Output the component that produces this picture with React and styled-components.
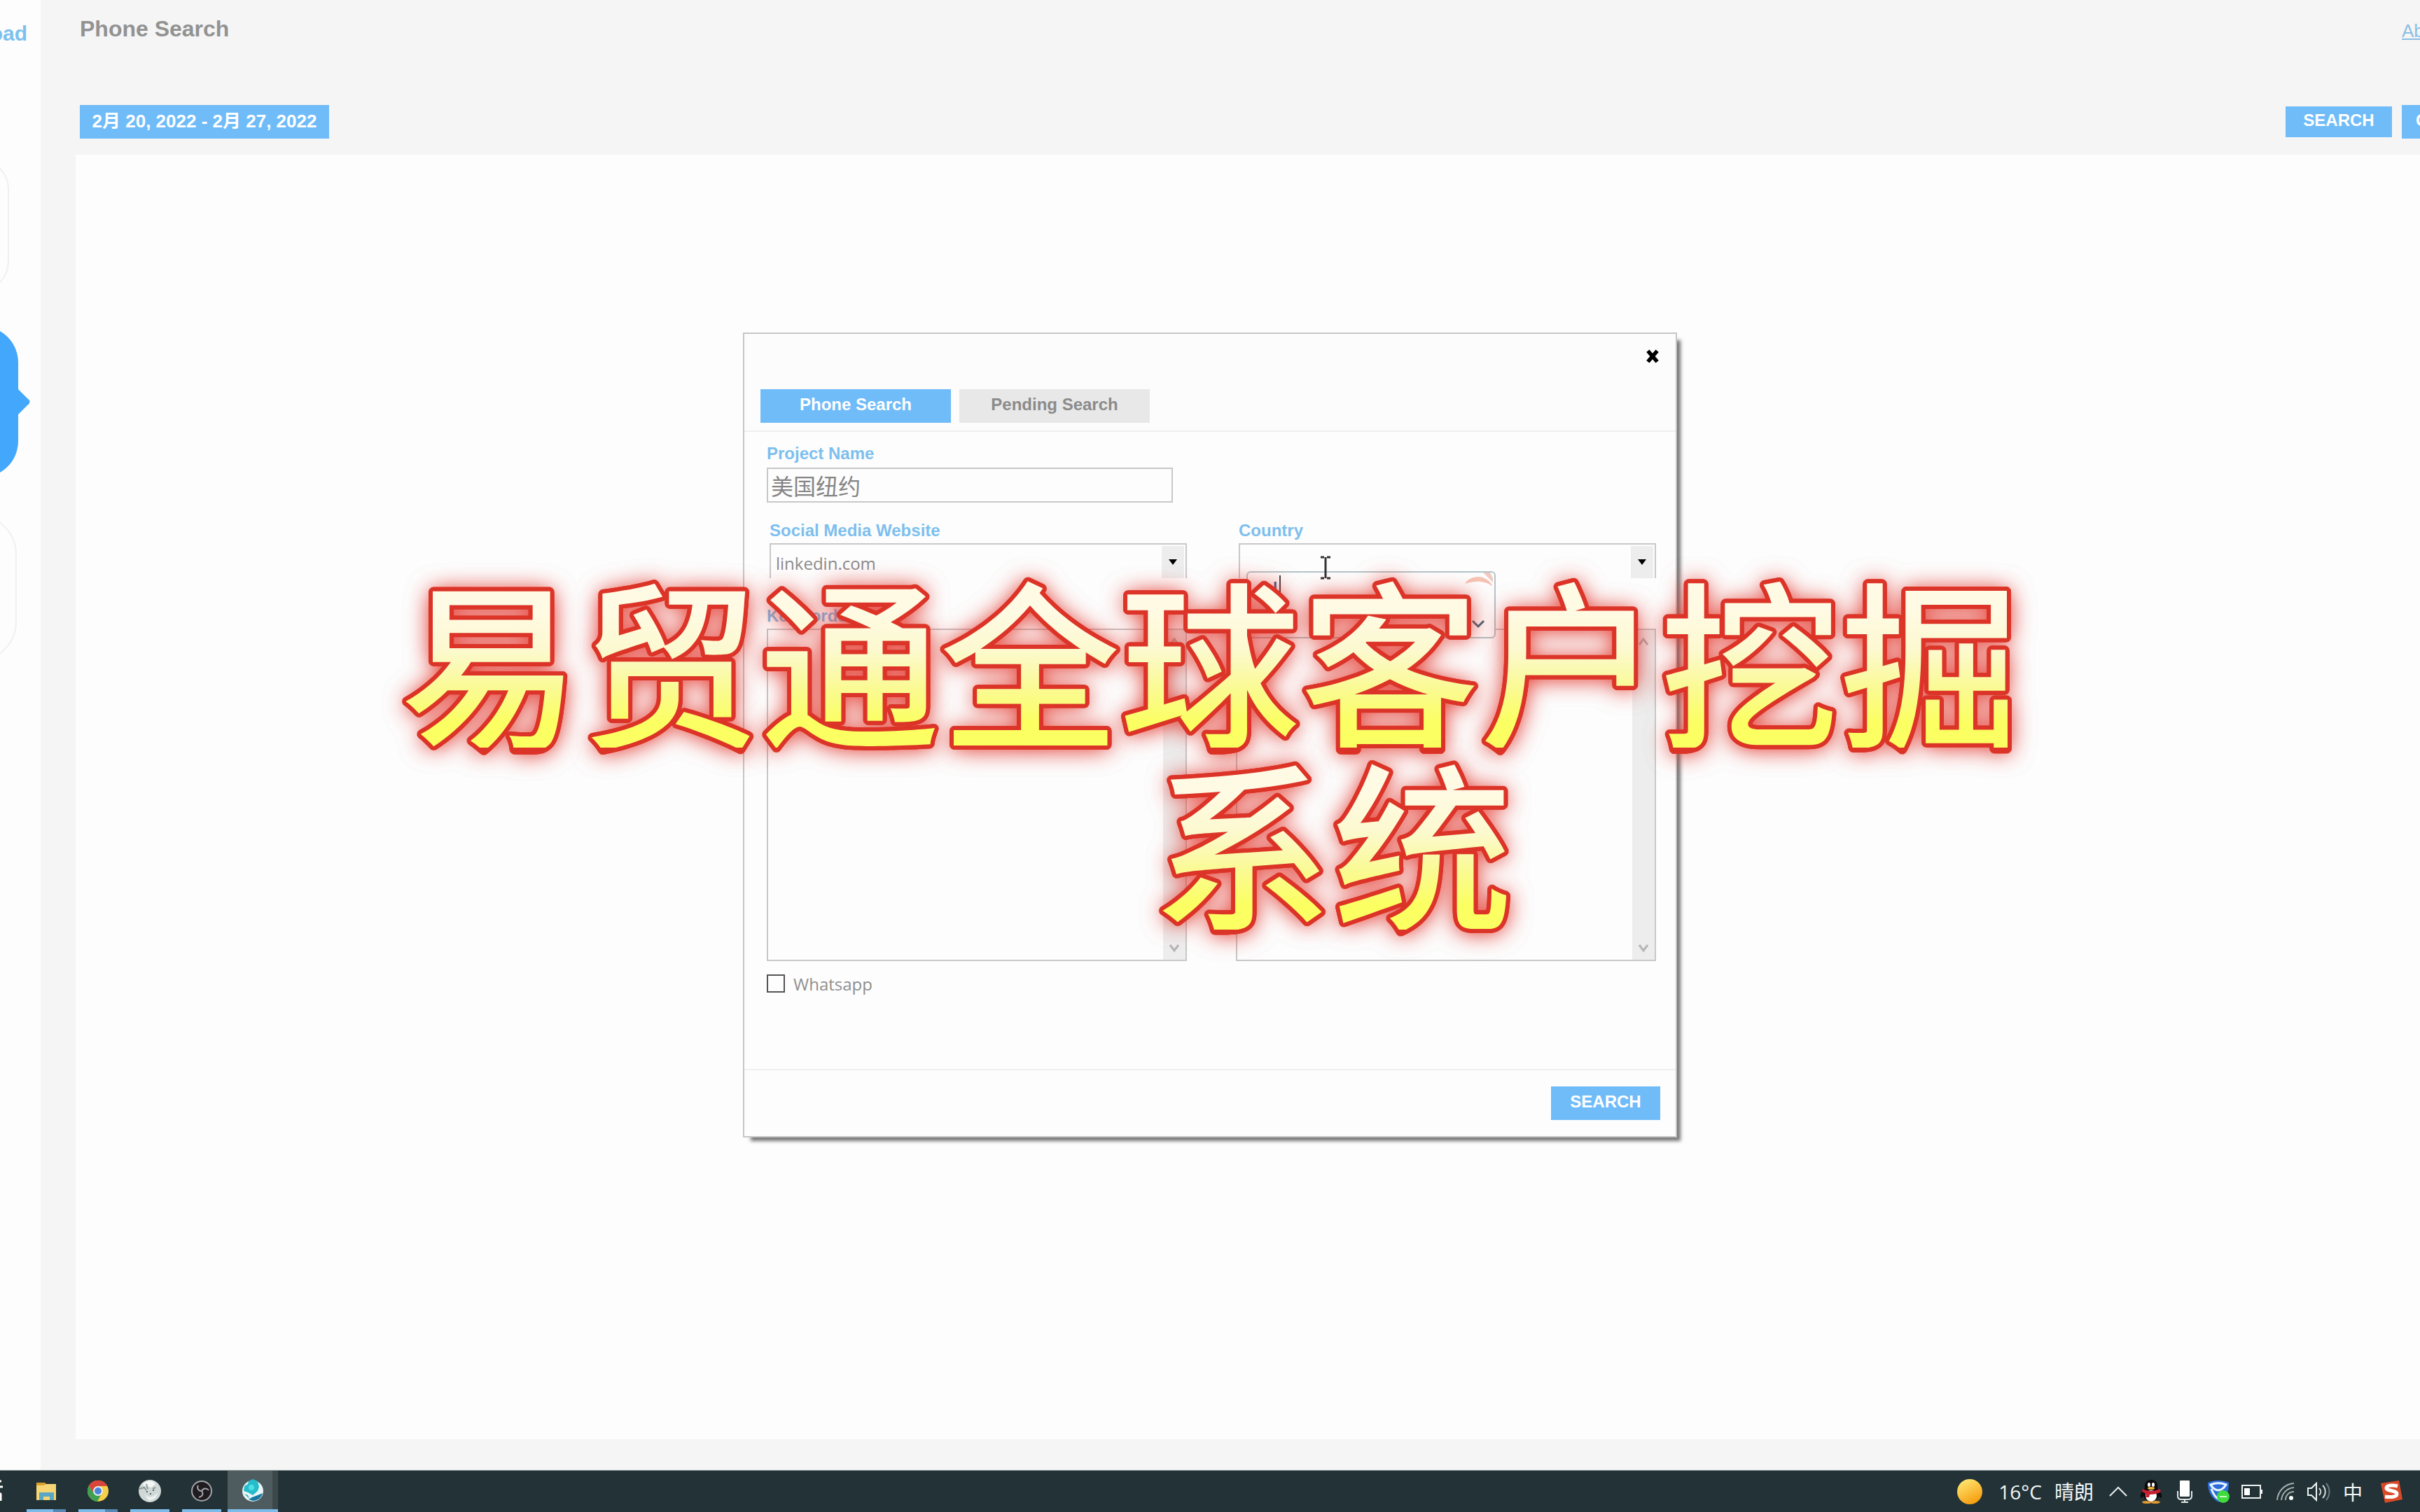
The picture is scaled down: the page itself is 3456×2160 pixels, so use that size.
import React, { useState } from "react";
import styled, { createGlobalStyle } from "styled-components";

const GlobalStyle = createGlobalStyle`
  * {
    box-sizing: border-box;
  }
  body {
    margin: 0;
    background-color: #f5f5f5;
    font-family: "Liberation Sans", "Noto Sans CJK SC", sans-serif;
  }
  button, input, select, textarea {
    font-family: inherit;
    margin: 0;
    border-radius: 0;
  }
`;

const Screen = styled.div`
  position: relative;
  display: flex;
  flex-direction: column;
  min-height: 100vh;
  overflow: hidden;
`;

const Workspace = styled.div`
  position: relative;
  display: flex;
  flex: 1;
`;

const Sidebar = styled.aside`
  display: flex;
  flex-direction: column;
  align-items: flex-start;
  width: 58px;
  overflow: hidden;
  background-color: #fdfdfd;
`;

const SidebarTitle = styled.div`
  display: flex;
  justify-content: flex-end;
  width: 39px;
  height: 231px;
  padding-top: 30px;
  overflow: hidden;
  color: #7cc1ee;
  font-size: 30px;
  font-weight: bold;
  line-height: 36px;
`;

const NavShapes = styled.svg`
  display: block;
  width: 58px;
  height: 720px;
`;

const Main = styled.main`
  display: flex;
  flex: 1;
  flex-direction: column;
  min-width: 0;
  padding: 0 0 44px 50px;
`;

const TopBar = styled.header`
  display: flex;
  justify-content: space-between;
  height: 150px;
  padding: 22px 0 0 6px;
`;

const PageTitle = styled.h1`
  margin: 0;
  color: #929292;
  font-size: 32px;
  line-height: 38px;
`;

const AboutLink = styled.a`
  width: 26px;
  overflow: hidden;
  color: #8bbfe4;
  font-size: 26px;
  line-height: 44px;
`;

const Toolbar = styled.div`
  display: flex;
  align-items: center;
  gap: 14px;
  height: 71px;
  padding: 0 0 23px 6px;
`;

const BlueButton = styled.button`
  width: ${(props) => props.$width}px;
  height: ${(props) => props.$height || 48}px;
  padding: 0 0 4px;
  overflow: hidden;
  border: none;
  background-color: #70bcf9;
  color: #fff;
  font-size: 24px;
  font-weight: bold;
  white-space: nowrap;
`;

const DateButton = styled(BlueButton)`
  padding-bottom: 8px;
  font-size: 26px;
`;

const ClippedButton = styled(BlueButton)`
  padding-left: 20px;
  text-align: left;
`;

const Spacer = styled.div`
  flex: 1;
`;

const Panel = styled.section`
  flex: 1;
  background-color: #fdfdfd;
`;

const ModalLayer = styled.div`
  position: absolute;
  inset: 0;
  display: flex;
  align-items: center;
  justify-content: center;
`;

const Modal = styled.form`
  width: 1334px;
  border: 2px solid #c6c6c6;
  background-color: #fdfdfd;
  box-shadow: 8px 8px 5px -3px #777;
`;

const ModalHeader = styled.div`
  height: 140px;
  padding: 20px 21px 0 23px;
  border-bottom: 2px solid #efefef;
  background-color: #fcfcfc;
`;

const CloseButton = styled.button`
  display: block;
  width: 24px;
  height: 24px;
  margin: 0 0 35px auto;
  padding: 2px;
  border: none;
  background: none;

  svg {
    display: block;
  }
`;

const Tabs = styled.div`
  display: flex;
  gap: 12px;
`;

const Tab = styled.button`
  width: 272px;
  height: 48px;
  padding: 0 0 4px;
  border: none;
  background-color: ${(props) => (props.$active ? "#70bcf9" : "#e8e8e8")};
  color: ${(props) => (props.$active ? "#fff" : "#8b8b8b")};
  font-size: 24px;
  font-weight: bold;
`;

const ModalBody = styled.div`
  height: 910px;
  padding: 17px 26px 0 32px;
`;

const Columns = styled.div`
  display: grid;
  grid-template-columns: 600px 600px;
  column-gap: 70px;
`;

const Field = styled.div`
  position: relative;
  padding-left: ${(props) => props.$indent || 0}px;
`;

const Label = styled.label`
  display: block;
  height: ${(props) => props.$height || 32}px;
  color: #7dbfee;
  font-size: 24px;
  font-weight: bold;
  line-height: 28px;
`;

const TextInput = styled.input`
  display: block;
  width: 580px;
  height: 50px;
  margin-bottom: 26px;
  padding: 0 4px;
  border: 2px solid #c8c8c8;
  background-color: #fdfdfd;
  color: #858585;
  font-size: 32px;
  outline: none;
`;

const SelectBox = styled.div`
  position: relative;
  width: 596px;
  height: 50px;
  margin-bottom: 40px;
`;

const Select = styled.select`
  width: 100%;
  height: 100%;
  padding: 4px 0 0 7px;
  border: 2px solid #c8c8c8;
  border-bottom: none;
  background-color: #fdfdfd;
  color: #8b8b8b;
  font-family: "Open Sans", "Noto Sans CJK SC", sans-serif;
  font-size: 24px;
  appearance: none;
`;

const SelectArrow = styled.span`
  position: absolute;
  top: 4px;
  right: 4px;
  bottom: 0;
  display: flex;
  align-items: center;
  justify-content: center;
  width: 32px;
  background-color: #ededed;
  pointer-events: none;
`;

const AreaBox = styled.div`
  display: flex;
  height: 475px;
  border: 2px solid #c8c8c8;
`;

const TextArea = styled.textarea`
  flex: 1;
  padding: 8px;
  border: none;
  background-color: #fdfdfd;
  font-size: 24px;
  resize: none;
  outline: none;
`;

const ScrollBar = styled.div`
  display: flex;
  flex-direction: column;
  align-items: center;
  justify-content: space-between;
  width: 32px;
  padding: 10px 0;
  background-color: #ededed;
`;

const CheckRow = styled.label`
  display: flex;
  align-items: center;
  gap: 12px;
  height: 36px;
  margin-top: 14px;
  color: #8f8f8f;
  font-family: "Open Sans", sans-serif;
  font-size: 24px;
`;

const CheckBox = styled.input`
  width: 26px;
  height: 26px;
  border: 2px solid #555;
  background-color: #fdfdfd;
  appearance: none;
`;

const ModalFooter = styled.div`
  display: flex;
  justify-content: flex-end;
  height: 96px;
  padding: 23px 22px 0;
  border-top: 2px solid #f1efef;
`;

// input method window that floats under the caret
const ImePopup = styled.div`
  position: absolute;
  top: 72px;
  left: 15px;
  display: flex;
  align-items: flex-start;
  justify-content: space-between;
  width: 356px;
  height: 96px;
  padding: 4px 14px 12px 20px;
  border: 2px solid #b4c4c8;
  border-radius: 6px;
  background-color: #fdfdfd;
`;

const Composition = styled.span`
  padding-right: 2px;
  border-right: 2px solid #444;
  color: #3c5a9a;
  font-size: 32px;
  line-height: 40px;
`;

const ImeMore = styled.svg`
  align-self: flex-end;
`;

const TextCursor = styled.svg`
  position: absolute;
  top: 50px;
  left: 121px;
`;

const CaptionLayer = styled.div`
  position: absolute;
  inset: 0;
  display: flex;
  flex-direction: column;
  align-items: center;
  justify-content: center;
  padding-bottom: 24px;
  pointer-events: none;
`;

// ring of hard shadows, gives the letters an outline with round corners
const ring = Array.from({ length: 24 }, (_, i) => {
  const angle = (i * Math.PI) / 12;
  const x = (6 * Math.cos(angle)).toFixed(1);
  const y = (6 * Math.sin(angle)).toFixed(1);
  return `${x}px ${y}px 0 #dc3428`;
}).join(", ");

const CaptionLine = styled.div`
  position: relative;
  padding-left: ${(props) => props.$indent || 0}px;
  color: #dc3428;
  font-family: "Noto Sans CJK SC", sans-serif;
  font-size: 257px;
  font-weight: 500;
  line-height: 260px;
  white-space: nowrap;
  text-shadow: ${ring}, 0 2px 24px rgba(226, 44, 34, 0.6),
    0 2px 36px rgba(226, 44, 34, 0.6), 0 2px 36px rgba(226, 44, 34, 0.5);

  &::before {
    content: "${(props) => props.$text}";
    position: absolute;
    background: linear-gradient(#fffae4 24%, #fcf9d0 46%, #fafa92 68%, #fbff62 86%);
    background-clip: text;
    color: transparent;
    text-shadow: none;
  }
`;

const Taskbar = styled.footer`
  display: flex;
  justify-content: space-between;
  height: 60px;
  border-top: 1px solid #8d9797;
  background-color: #223236;
`;

const TaskList = styled.div`
  display: flex;
`;

const StartEdge = styled.svg`
  width: 29px;
  height: 59px;
`;

const TaskButton = styled.button`
  display: flex;
  flex-direction: column;
  align-items: center;
  width: ${(props) => (props.$active ? 72 : 74)}px;
  padding: 11px 0 0;
  border: none;
  background-color: ${(props) => (props.$active ? "#4f5c5f" : "transparent")};
  box-shadow: ${(props) => (props.$active ? "inset -8px 0 #3b494c" : "none")};

  svg {
    display: block;
    margin-bottom: 8px;
  }
`;

const Underline = styled.span`
  width: ${(props) => (props.$full ? 72 : 56)}px;
  height: 4px;
  background: ${(props) =>
    props.$split ? "linear-gradient(90deg, #7cbcea 38px, #5688b4 38px)" : "#7cbcea"};
`;

const Tray = styled.div`
  display: flex;
  align-items: center;
  padding-right: 10px;
  color: #f2f6f6;

  svg {
    display: block;
  }
`;

const Weather = styled.div`
  display: flex;
  align-items: center;
  gap: 18px;
  margin: 0 22px;
  font-family: "Open Sans", "Noto Sans CJK SC", sans-serif;
  font-size: 28px;
  line-height: 40px;
`;

const TrayIcons = styled.div`
  display: grid;
  grid-template-columns: repeat(7, 48px) 62px;
  justify-items: center;
  align-items: center;
  margin-left: 10px;
`;

const Language = styled.span`
  font-family: "Noto Sans CJK SC", sans-serif;
  font-size: 28px;
  line-height: 40px;
`;

const Triangle = () => (
  <svg width="12" height="8" viewBox="0 0 12 8">
    <path d="M0 0h12L6 8z" fill="#000" />
  </svg>
);

const Chevron = ({ up }) => (
  <svg width="16" height="14" viewBox="0 0 16 14">
    <path
      d={up ? "M2 11l6-8 6 8" : "M2 3l6 8 6-8"}
      fill="none"
      stroke="#b5b5b5"
      strokeWidth="3"
    />
  </svg>
);

const ScrollArea = ({ id, label }) => (
  <AreaBox>
    <TextArea id={id} aria-label={label} />
    <ScrollBar>
      <Chevron up />
      <Chevron />
    </ScrollBar>
  </AreaBox>
);

const FolderIcon = () => (
  <svg width="32" height="36" viewBox="0 0 32 36">
    <path d="M2 6h12l3 3h13v7H2z" fill="#d9a02c" />
    <path d="M2 10h10l4-2h14v23H2z" fill="#f6d674" />
    <path d="M6 31V20h21v11h-6v-5h-9v5z" fill="#5ba6c4" />
  </svg>
);

const ChromeIcon = () => (
  <svg width="32" height="36" viewBox="0 0 32 36">
    <circle cx="16" cy="18" r="15" fill="#f5cf49" />
    <path d="M3 10.500A15 15 0 0 0 15 33l6-11-10 0z" fill="#3f9f52" />
    <path d="M3 10.500L10 21 16 11H29.500A15 15 0 0 0 3 10.500z" fill="#d8453a" />
    <circle cx="16" cy="18" r="7" fill="#e8eef2" />
    <circle cx="16" cy="18" r="5" fill="#4a84dc" />
  </svg>
);

const BallIcon = () => (
  <svg width="32" height="36" viewBox="0 0 32 36">
    <circle cx="16" cy="18" r="16" fill="#cfd8d6" />
    <path d="M5 9c6-7 15-7 19-1l-6 5-9-2z" fill="#f3f6f5" />
    <path d="M8 22c5 6 14 6 19-2-1 8-7 12-13 11z" fill="#eef2f1" />
    <path d="M1 15l7-2 3 4M11 8l2 7M20 15l4-2" fill="none" stroke="#8d9998" strokeWidth="2" />
    <circle cx="12" cy="19" r="1" fill="#33403f" />
    <circle cx="17" cy="22" r="1" fill="#33403f" />
    <circle cx="21" cy="17" r="1" fill="#33403f" />
  </svg>
);

const ObsIcon = () => (
  <svg width="32" height="36" viewBox="0 0 32 36">
    <circle cx="16" cy="18" r="14" fill="#1f1b20" stroke="#a5a5a8" strokeWidth="2" />
    <path
      d="M16 18c-5 0-7-4-5-8M16 18c2-4 7-5 10-1M16 18c3 4 1 8-4 9"
      fill="none"
      stroke="#a5a5a8"
      strokeWidth="2"
    />
  </svg>
);

const GlobeIcon = () => (
  <svg width="32" height="36" viewBox="0 0 32 36">
    <circle cx="16" cy="18" r="15" fill="#e9f6f8" />
    <path d="M10 4l6-3 7 3 2 8-2 6-7 6-7-4-6-2 1-7 5-3z" fill="#25bccb" />
    <path d="M15 27l8-3 7-3c-2 7-7 11-14 11l-6-2z" fill="#1778a5" />
    <path d="M4 22l5 2 2 5z" fill="#25a5bb" />
    <circle cx="14" cy="13" r="4" fill="#4ee0e4" />
  </svg>
);

const SunIcon = () => (
  <svg width="38" height="38" viewBox="0 0 38 38">
    <defs>
      <linearGradient id="sun" x1="0.200" y1="0" x2="0.700" y2="1">
        <stop offset="0" stopColor="#ffe873" />
        <stop offset="1" stopColor="#f59a0c" />
      </linearGradient>
    </defs>
    <circle cx="19" cy="19" r="18" fill="url(#sun)" />
  </svg>
);

const UpIcon = () => (
  <svg width="26" height="16" viewBox="0 0 26 16">
    <path d="M1 14L13 2l12 12" fill="none" stroke="#e8eeee" strokeWidth="2" />
  </svg>
);

const PenguinIcon = () => (
  <svg width="32" height="34" viewBox="0 0 32 34">
    <ellipse cx="10" cy="32" rx="7" ry="2" fill="#e09a30" />
    <ellipse cx="22" cy="32" rx="7" ry="2" fill="#e09a30" />
    <path d="M16 0c-7 0-10 5-9 12-4 4-7 9-6 13 1 2 3 0 4-2 1 5 5 8 11 8s10-3 11-8c1 2 3 4 4 2 1-4-2-9-6-13C26 5 23 0 16 0z" fill="#0b0b0d" />
    <ellipse cx="16" cy="23" rx="8" ry="8" fill="#fff" />
    <path d="M4 13c8 4 16 4 24 0l2 4c-5 3-10 4-16 4l-1 4H8l1-5-6-3z" fill="#c51f30" />
    <ellipse cx="13" cy="7" rx="2" ry="3" fill="#fff" />
    <ellipse cx="19" cy="7" rx="2" ry="3" fill="#fff" />
    <ellipse cx="16" cy="12" rx="5" ry="2" fill="#efb03a" />
  </svg>
);

const MicIcon = () => (
  <svg width="24" height="34" viewBox="0 0 24 34">
    <rect x="5" y="1" width="14" height="23" rx="1" fill="#fff" />
    <path d="M2 16v7c0 3 2 5 5 5h10c3 0 5-2 5-5v-7M12 28v4M7 32h10" fill="none" stroke="#dfe5e5" strokeWidth="2" />
  </svg>
);

const ShieldIcon = () => (
  <svg width="32" height="34" viewBox="0 0 32 34">
    <path d="M1 4c9-4 20-4 30 0 0 14-4 23-14 28C6 27 1 17 1 4z" fill="#2c6ddb" />
    <path d="M5 7c7-3 15-3 22 0-3 5-8 8-12 8C11 14 7 11 5 7zM6 13c3 8 7 13 11 15" fill="none" stroke="#eaf4ff" strokeWidth="3" />
    <circle cx="23" cy="24" r="9" fill="#3fdc3c" />
    <path d="M18 24h10" stroke="#c9ffc4" strokeWidth="2" />
  </svg>
);

const BatteryIcon = () => (
  <svg width="32" height="20" viewBox="0 0 32 20">
    <rect x="2" y="1" width="26" height="18" fill="none" stroke="#eef3f3" strokeWidth="2" />
    <path d="M5 5h8v10H5z" fill="#fff" />
    <path d="M30 7v6" stroke="#eef3f3" strokeWidth="2" />
  </svg>
);

const WifiIcon = () => (
  <svg width="26" height="26" viewBox="0 0 26 26">
    <path d="M1 25C2 12 12 2 25 1M7 25C8 15 15 8 25 7M13 25c0-7 5-12 12-12" fill="none" stroke="#a5afb0" strokeWidth="2" />
    <circle cx="21" cy="22" r="3" fill="#fff" />
  </svg>
);

const SpeakerIcon = () => (
  <svg width="34" height="28" viewBox="0 0 34 28">
    <path d="M1 9h5l7-7v24l-7-7H1z" fill="none" stroke="#eef3f3" strokeWidth="2" />
    <path d="M17 9c3 3 3 7 0 10M22 5c5 5 5 13 0 18" fill="none" stroke="#d5dcdc" strokeWidth="2" />
    <path d="M27 2c6 7 6 17 0 24" fill="none" stroke="#6d7b7e" strokeWidth="2" />
  </svg>
);

const SogouIcon = () => (
  <svg width="34" height="34" viewBox="0 0 34 34">
    <path d="M2 5L28 1l5 27-25 5z" fill="#d94b28" />
    <path d="M26 9c-8-2-16-1-16 3s15 3 15 8-9 5-17 4" fill="none" stroke="#fff" strokeWidth="5" />
  </svg>
);

// faint swirl in the corner of the input method window
const ImeSkin = styled.svg`
  position: absolute;
  top: 0;
  right: 0;
`;

const tasks = [
  { name: "Files", Icon: FolderIcon, split: true },
  { name: "Chrome", Icon: ChromeIcon, split: true },
  { name: "Player", Icon: BallIcon },
  { name: "Recorder", Icon: ObsIcon },
  { name: "Browser", Icon: GlobeIcon, active: true },
];

const captions = [
  { text: "易贸通全球客户挖掘", indent: 0 },
  { text: "系统", indent: 350 },
];

const SearchModal = () => {
  const [tab, setTab] = useState("phone");
  return (
    <Modal onSubmit={(e) => e.preventDefault()}>
      <ModalHeader>
        <CloseButton type="button" aria-label="Close">
          <svg width="20" height="20" viewBox="0 0 18 18">
            <path d="M3 2l12 14M15 2L3 16" stroke="#000" strokeWidth="5" />
          </svg>
        </CloseButton>
        <Tabs>
          <Tab type="button" $active={tab === "phone"} onClick={() => setTab("phone")}>
            Phone Search
          </Tab>
          <Tab type="button" $active={tab === "pending"} onClick={() => setTab("pending")}>
            Pending Search
          </Tab>
        </Tabs>
      </ModalHeader>
      <ModalBody>
        <Label htmlFor="project" $height={34}>
          Project Name
        </Label>
        <TextInput id="project" defaultValue="美国纽约" />
        <Columns>
          <Field $indent={4}>
            <Label htmlFor="website">Social Media Website</Label>
            <SelectBox>
              <Select id="website">
                <option>linkedin.com</option>
              </Select>
              <SelectArrow>
                <Triangle />
              </SelectArrow>
            </SelectBox>
          </Field>
          <Field $indent={4}>
            <Label htmlFor="country">Country</Label>
            <SelectBox>
              <Select id="country">
                <option></option>
              </Select>
              <SelectArrow>
                <Triangle />
              </SelectArrow>
            </SelectBox>
            <ImePopup>
              <ImeSkin width="60" height="60" viewBox="0 0 60 60">
                <path d="M18 16C26 2 50 2 58 20 46 10 30 12 18 16z" fill="#f6c4b4" />
                <path d="M44 0h10l4 8v6z" fill="#f2c9be" />
              </ImeSkin>
              <Composition>U</Composition>
              <ImeMore width="18" height="14" viewBox="0 0 18 14">
                <path d="M1 3l8 8 8-8" fill="none" stroke="#3f6d80" strokeWidth="3" />
              </ImeMore>
            </ImePopup>
            <TextCursor width="14" height="34" viewBox="0 0 14 34">
              <path d="M0 2h5M9 2h5M7 2v30M0 32h5M9 32h5" stroke="#333" strokeWidth="3" />
            </TextCursor>
          </Field>
        </Columns>
        <Columns>
          <Label htmlFor="keywords">Keywords</Label>
          <span />
          <ScrollArea id="keywords" />
          <ScrollArea id="results" label="Results" />
        </Columns>
        <CheckRow>
          <CheckBox type="checkbox" />
          Whatsapp
        </CheckRow>
      </ModalBody>
      <ModalFooter>
        <BlueButton $width={156}>SEARCH</BlueButton>
      </ModalFooter>
    </Modal>
  );
};

const App = () => (
  <>
    <GlobalStyle />
    <Screen>
      <Workspace>
        <Sidebar>
          <SidebarTitle>oad</SidebarTitle>
          <NavShapes viewBox="0 0 58 720">
            <rect x="-170" y="-4" width="182" height="190" rx="44" fill="#fdfdfd" stroke="#f0f0f0" strokeWidth="2" />
            <rect x="-190" y="235" width="216" height="216" rx="52" fill="#43a7fb" />
            <path d="M25 324l14 14q7 5 0 10l-14 14z" fill="#43a7fb" />
            <rect x="-190" y="505" width="213" height="208" rx="56" fill="#fdfdfd" stroke="#f0f0f0" strokeWidth="2" />
          </NavShapes>
        </Sidebar>
        <Main>
          <TopBar>
            <PageTitle>Phone Search</PageTitle>
            <AboutLink href="#about">Ab</AboutLink>
          </TopBar>
          <Toolbar>
            <DateButton $width={356}>2月 20, 2022 - 2月 27, 2022</DateButton>
            <Spacer />
            <BlueButton $width={152} $height={44}>
              SEARCH
            </BlueButton>
            <ClippedButton $width={26}>C</ClippedButton>
          </Toolbar>
          <Panel />
        </Main>
        <ModalLayer>
          <SearchModal />
        </ModalLayer>
      </Workspace>
      <Taskbar>
        <TaskList>
          <StartEdge viewBox="0 0 29 59">
            <path d="M0 15h2M0 23h4M0 33h2M1 33v10" stroke="#fff" strokeWidth="3" />
          </StartEdge>
          {tasks.map(({ name, Icon, split, active }) => (
            <TaskButton key={name} aria-label={name} $active={active}>
              <Icon />
              <Underline $split={split} $full={active} />
            </TaskButton>
          ))}
        </TaskList>
        <Tray>
          <SunIcon />
          <Weather>
            <span>16°C</span>
            <span>晴朗</span>
          </Weather>
          <UpIcon />
          <TrayIcons>
            <PenguinIcon />
            <MicIcon />
            <ShieldIcon />
            <BatteryIcon />
            <WifiIcon />
            <SpeakerIcon />
            <Language>中</Language>
            <SogouIcon />
          </TrayIcons>
        </Tray>
      </Taskbar>
      <CaptionLayer>
        {captions.map(({ text, indent }) => (
          <CaptionLine key={text} $text={text} $indent={indent}>
            {text}
          </CaptionLine>
        ))}
      </CaptionLayer>
    </Screen>
  </>
);

export default App;
